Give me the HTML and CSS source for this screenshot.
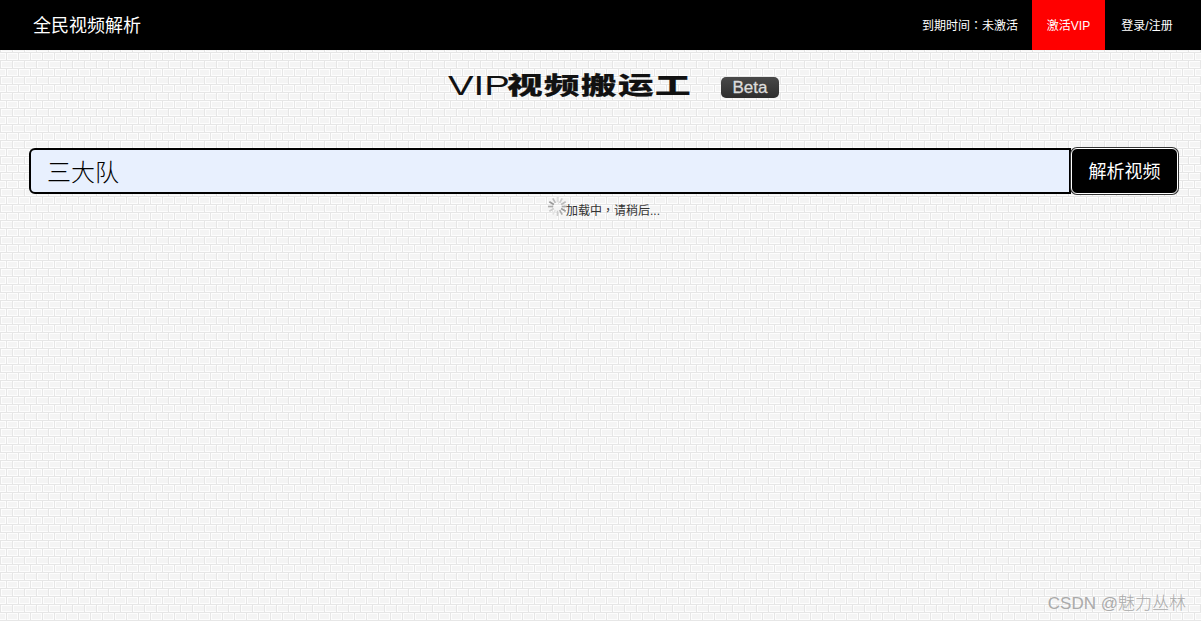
FILE: index.html
```html
<!DOCTYPE html>
<html lang="zh-CN">
<head>
<meta charset="utf-8">
<title>全民视频解析</title>
<link rel="stylesheet" href="styles.css">
</head>
<body>
<header class="topbar">
  <div class="brand">全民视频解析</div>
  <nav class="nav">
    <span class="nav-expire" lang="zh-TW">到期时间：未激活</span>
    <a class="nav-vip">激活VIP</a>
    <a class="nav-login">登录/注册</a>
  </nav>
</header>
<main class="main">
  <div class="logo">
    <span class="logo-title"><span class="logo-latin">VIP</span><span class="logo-cjk">视频搬运工</span></span>
    <span class="logo-badge">Beta</span>
  </div>
  <form class="search">
    <div class="search-input">三大队</div>
    <div class="search-btn">解析视频</div>
  </form>
  <div class="loading">
    <svg class="spinner" viewBox="0 0 20 20" width="21" height="21" aria-hidden="true">
      <g stroke-width="1.6" stroke-linecap="butt">
        <line class="s1" x1="10" y1="1" x2="10" y2="6"/>
        <line class="s2" x1="10" y1="1" x2="10" y2="6" transform="rotate(30 10 10)"/>
        <line class="s3" x1="10" y1="1" x2="10" y2="6" transform="rotate(60 10 10)"/>
        <line class="s4" x1="10" y1="1" x2="10" y2="6" transform="rotate(90 10 10)"/>
        <line class="s5" x1="10" y1="1" x2="10" y2="6" transform="rotate(120 10 10)"/>
        <line class="s6" x1="10" y1="1" x2="10" y2="6" transform="rotate(150 10 10)"/>
        <line class="s7" x1="10" y1="1" x2="10" y2="6" transform="rotate(180 10 10)"/>
        <line class="s8" x1="10" y1="1" x2="10" y2="6" transform="rotate(210 10 10)"/>
        <line class="s7" x1="10" y1="1" x2="10" y2="6" transform="rotate(240 10 10)"/>
        <line class="s6" x1="10" y1="1" x2="10" y2="6" transform="rotate(270 10 10)"/>
        <line class="s5" x1="10" y1="1" x2="10" y2="6" transform="rotate(300 10 10)"/>
        <line class="s3" x1="10" y1="1" x2="10" y2="6" transform="rotate(330 10 10)"/>
      </g>
    </svg>
    <span class="loading-text" lang="zh-TW">加载中，请稍后...</span>
  </div>
</main>
<div class="watermark">CSDN @魅力丛林</div>
</body>
</html>
```
FILE: styles.css
```css
* { box-sizing: border-box; }
html, body { height: 100%; }
body {
  margin: 0;
  overflow: hidden;
  position: relative;
  font-family: "Liberation Sans", "Noto Sans CJK TC", sans-serif;
  background-color: #f4f4f4;
  background-image: url("data:image/svg+xml,%3Csvg xmlns='http://www.w3.org/2000/svg' width='12' height='16'%3E%3Crect width='12' height='16' fill='%23f4f4f4'/%3E%3Cpath d='M0 4.5H12M0 12.5H12M6.5 4V13M.5 12V16M.5 0V5' stroke='%23fdfdfd' stroke-width='3'/%3E%3Cpath d='M0 4.5H12M0 12.5H12M6.5 4V13M.5 12V16M.5 0V5' stroke='%23e6e6e6' stroke-width='1'/%3E%3C/svg%3E");
}
.topbar {
  height: 50px;
  background: #000;
  color: #fff;
  display: flex;
  align-items: flex-start;
  justify-content: space-between;
  padding-left: 33px;
  padding-right: 12px;
}
.brand { font-size: 18px; line-height: 53px; }
.nav { display: flex; align-items: stretch; height: 50px; font-size: 12px; line-height: 53px; }
.nav-expire { padding-right: 14px; }
.nav-vip { width: 73px; background: #f00; text-align: center; }
.nav-login { width: 84px; text-align: center; }
.main { padding: 0 23px 0 29px; }
.logo {
  height: 98px;
  display: flex;
  align-items: flex-start;
  padding-top: 23px;
  padding-left: 419px;
}
.logo-title {
  display: flex;
  align-items: center;
  width: 273px;
  height: 26px;
  color: #111;
  white-space: nowrap;
}
.logo-latin {
  flex: none;
  width: 59px;
  font-size: 27px;
  line-height: 26px;
  transform: scaleX(1.42);
  transform-origin: left center;
}
.logo-cjk {
  flex: none;
  width: 125px;
  font-size: 24px;
  line-height: 26px;
  font-weight: 900;
  letter-spacing: 1px;
  transform: scaleX(1.48);
  transform-origin: left center;
  -webkit-text-stroke: 0.2px #111;
}
.logo-badge {
  flex: none;
  margin-top: 4px;
  width: 58px;
  height: 21px;
  border-radius: 5px;
  background: linear-gradient(#484848, #2e2e2e);
  color: #dcdcdc;
  font-size: 17px;
  line-height: 21px;
  text-align: center;
  -webkit-text-stroke: 0.3px #dcdcdc;
}
.search { display: flex; height: 46px; }
.search-input {
  flex: 1;
  background: #e8f0fe;
  border: 2px solid #000;
  border-radius: 6px 0 0 6px;
  padding-left: 16px;
  font-size: 24px;
  font-weight: 300;
  line-height: 45px;
  color: #000;
}
.search-btn {
  width: 107px;
  background: #000;
  color: #fff;
  border: 1px solid #fff;
  box-shadow: 0 0 0 1px #333;
  border-radius: 6px;
  font-size: 18px;
  line-height: 47px;
  text-align: center;
}
.loading {
  display: flex;
  justify-content: center;
  align-items: flex-start;
  height: 24px;
  padding-top: 2px;
}
.spinner { display: block; }
.loading-text { font-size: 12px; line-height: 16px; margin-top: 7px; margin-left: -2px; color: #333; }
.s1 { stroke: #ddd; }
.s2 { stroke: #ccc; }
.s3 { stroke: #bbb; }
.s4 { stroke: #aaa; }
.s5 { stroke: #999; }
.s6 { stroke: #aaa; }
.s7 { stroke: #ccc; }
.s8 { stroke: #e2e2e2; }
.watermark {
  position: absolute;
  right: 15px;
  bottom: 5px;
  font-size: 17px;
  font-weight: 300;
  line-height: 24px;
  color: #aaa;
}
```
